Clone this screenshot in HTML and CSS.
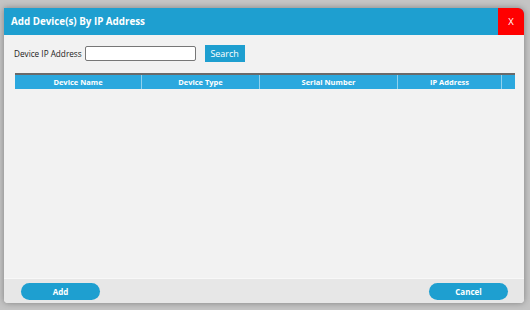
FILE: index.html
```html
<!DOCTYPE html>
<html lang="en">
<head>
    <meta charset="UTF-8">
    <title>Add Device(s) By IP Address</title>
    <link rel="stylesheet" href="styles.css">
</head>
<body>
    <div class="dialog">
        <div class="dialog-header">
            <span class="dialog-title">Add Device(s) By IP Address</span>
            <button class="close-btn" type="button">X</button>
        </div>
        <div class="dialog-body">
            <div class="search-row">
                <label for="device-ip">Device IP Address</label>
                <input type="text" id="device-ip">
                <button class="search-btn" type="button">Search</button>
            </div>
            <table class="device-table">
                <thead>
                    <tr>
                        <th class="col-name">Device Name</th>
                        <th class="col-type">Device Type</th>
                        <th class="col-serial">Serial Number</th>
                        <th class="col-ip">IP Address</th>
                        <th class="col-pad"></th>
                    </tr>
                </thead>
                <tbody></tbody>
            </table>
        </div>
        <div class="dialog-footer">
            <button class="pill-btn" type="button">Add</button>
            <button class="pill-btn" type="button">Cancel</button>
        </div>
    </div>
</body>
</html>
```

FILE: styles.css
```css
body {
    margin: 0;
    height: 310px;
    background-color: #c4c4c4;
    font-family: "Open Sans", "Noto Sans", sans-serif;
    overflow: hidden;
}
.dialog {
    margin: 8px 6px 0 4px;
    height: 295px;
    background-color: #f2f2f2;
    border-radius: 0 6px 4px 4px;
    box-shadow: 0 0 6px rgba(0, 0, 0, 0.35);
    display: flex;
    flex-direction: column;
    overflow: hidden;
}
.dialog-header {
    height: 27px;
    background-color: #1e9fd0;
    display: flex;
    align-items: center;
    justify-content: space-between;
}
.dialog-title {
    color: #fff;
    font-weight: 700;
    font-size: 9.8px;
    padding-left: 7px;
}
.close-btn {
    width: 26px;
    height: 27px;
    border: none;
    background-color: #ff0000;
    color: #fff;
    font-family: inherit;
    font-size: 9.5px;
    padding: 0;
}
.dialog-body {
    flex: 1;
    padding: 10px 9px 0 11px;
}
.search-row {
    display: flex;
    align-items: center;
    height: 17px;
    margin-left: -1px;
}
.search-row label {
    font-size: 8.2px;
    color: #222;
    margin-right: 3px;
}
.search-row input {
    width: 109px;
    height: 13px;
    padding: 0;
    border: 1px solid #777;
    border-radius: 2px;
    background-color: #fff;
}
.search-btn {
    margin-left: 9px;
    width: 40px;
    height: 17px;
    border: none;
    background-color: #1e9fd0;
    color: #fff;
    font-family: inherit;
    font-size: 9px;
    padding: 0;
}
.device-table {
    width: 100%;
    margin-top: 11px;
    border-collapse: collapse;
    border-top: 2px solid #6a6a6a;
}
.device-table th {
    height: 14px;
    padding: 0;
    background-color: #2ba8de;
    color: #fff;
    font-size: 7.5px;
    font-weight: 700;
    border-left: 1px solid #8fd1ee;
}
.device-table th:first-child {
    border-left: none;
}
.col-name { width: 126px; }
.col-type { width: 117px; }
.col-serial { width: 137px; }
.col-ip { width: 103px; }
.dialog-footer {
    height: 24px;
    background-color: #e7e7e7;
    border-top: 1px solid #f8f8f8;
    display: flex;
    align-items: center;
    justify-content: space-between;
    padding: 0 16px 0 17px;
}
.pill-btn {
    width: 79px;
    height: 17px;
    border: none;
    border-radius: 9px;
    background-color: #1e9fd0;
    color: #fff;
    font-family: inherit;
    font-size: 8px;
    font-weight: 700;
    padding: 0;
}
```
